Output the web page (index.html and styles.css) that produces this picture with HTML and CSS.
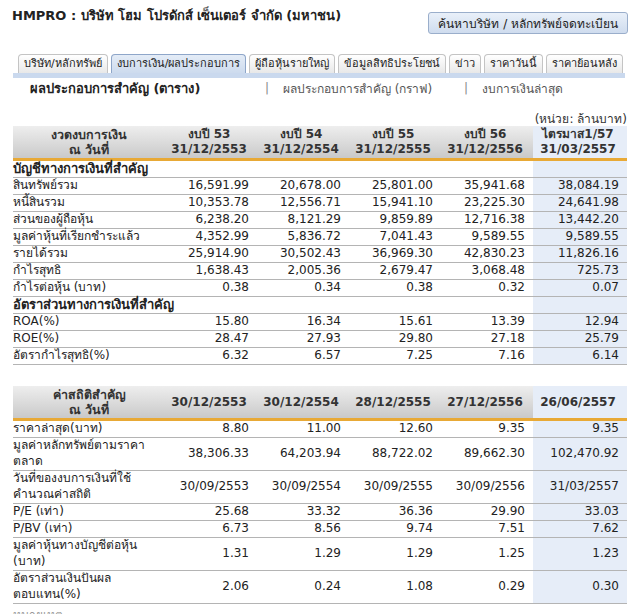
FILE: index.html
```html
<!DOCTYPE html>
<html lang="th">
<head>
<meta charset="utf-8">
<title>HMPRO</title>
<link rel="stylesheet" href="styles.css">
</head>
<body>
<div class="page">
  <div class="top">
    <div class="title">HMPRO : บริษัท โฮม โปรดักส์ เซ็นเตอร์ จำกัด (มหาชน)</div>
    <button class="search-btn">ค้นหาบริษัท / หลักทรัพย์จดทะเบียน</button>
  </div>
  <div class="tabs">
    <span class="tab">บริษัท/หลักทรัพย์</span>
    <span class="tab active">งบการเงิน/ผลประกอบการ</span>
    <span class="tab">ผู้ถือหุ้นรายใหญ่</span>
    <span class="tab">ข้อมูลสิทธิประโยชน์</span>
    <span class="tab">ข่าว</span>
    <span class="tab">ราคาวันนี้</span>
    <span class="tab">ราคาย้อนหลัง</span>
  </div>
  <div class="band"></div>
  <div class="subnav">
    <span class="sub sub-current">ผลประกอบการสำคัญ (ตาราง)</span>
    <span class="sep">|</span>
    <span class="sub sub-2">ผลประกอบการสำคัญ (กราฟ)</span>
    <span class="sep">|</span>
    <span class="sub">งบการเงินล่าสุด</span>
  </div>
  <div class="unit">(หน่วย: ล้านบาท)</div>
  <table class="fin">
    <colgroup><col class="c-label"><col class="c-num"><col class="c-num"><col class="c-num"><col class="c-num"><col class="c-last"></colgroup>
    <thead>
      <tr>
        <th class="h-label">งวดงบการเงิน<br>ณ วันที่</th>
        <th>งบปี 53<br>31/12/2553</th>
        <th>งบปี 54<br>31/12/2554</th>
        <th>งบปี 55<br>31/12/2555</th>
        <th>งบปี 56<br>31/12/2556</th>
        <th class="hl">ไตรมาส1/57<br>31/03/2557</th>
      </tr>
    </thead>
    <tbody>
      <tr class="sec"><td class="lbl">บัญชีทางการเงินที่สำคัญ</td><td></td><td></td><td></td><td></td><td class="hl"></td></tr>
      <tr><td class="lbl">สินทรัพย์รวม</td><td>16,591.99</td><td>20,678.00</td><td>25,801.00</td><td>35,941.68</td><td class="hl">38,084.19</td></tr>
      <tr><td class="lbl">หนี้สินรวม</td><td>10,353.78</td><td>12,556.71</td><td>15,941.10</td><td>23,225.30</td><td class="hl">24,641.98</td></tr>
      <tr><td class="lbl">ส่วนของผู้ถือหุ้น</td><td>6,238.20</td><td>8,121.29</td><td>9,859.89</td><td>12,716.38</td><td class="hl">13,442.20</td></tr>
      <tr><td class="lbl">มูลค่าหุ้นที่เรียกชำระแล้ว</td><td>4,352.99</td><td>5,836.72</td><td>7,041.43</td><td>9,589.55</td><td class="hl">9,589.55</td></tr>
      <tr><td class="lbl">รายได้รวม</td><td>25,914.90</td><td>30,502.43</td><td>36,969.30</td><td>42,830.23</td><td class="hl">11,826.16</td></tr>
      <tr><td class="lbl">กำไรสุทธิ</td><td>1,638.43</td><td>2,005.36</td><td>2,679.47</td><td>3,068.48</td><td class="hl">725.73</td></tr>
      <tr><td class="lbl">กำไรต่อหุ้น (บาท)</td><td>0.38</td><td>0.34</td><td>0.38</td><td>0.32</td><td class="hl">0.07</td></tr>
      <tr class="sec"><td class="lbl">อัตราส่วนทางการเงินที่สำคัญ</td><td></td><td></td><td></td><td></td><td class="hl"></td></tr>
      <tr><td class="lbl">ROA(%)</td><td>15.80</td><td>16.34</td><td>15.61</td><td>13.39</td><td class="hl">12.94</td></tr>
      <tr><td class="lbl">ROE(%)</td><td>28.47</td><td>27.93</td><td>29.80</td><td>27.18</td><td class="hl">25.79</td></tr>
      <tr><td class="lbl">อัตรากำไรสุทธิ(%)</td><td>6.32</td><td>6.57</td><td>7.25</td><td>7.16</td><td class="hl">6.14</td></tr>
    </tbody>
  </table>

  <table class="fin stats">
    <colgroup><col class="c-label"><col class="c-num"><col class="c-num"><col class="c-num"><col class="c-num"><col class="c-last"></colgroup>
    <thead>
      <tr>
        <th class="h-label">ค่าสถิติสำคัญ<br>ณ วันที่</th>
        <th>30/12/2553</th>
        <th>30/12/2554</th>
        <th>28/12/2555</th>
        <th>27/12/2556</th>
        <th class="hl">26/06/2557</th>
      </tr>
    </thead>
    <tbody>
      <tr><td class="lbl">ราคาล่าสุด(บาท)</td><td>8.80</td><td>11.00</td><td>12.60</td><td>9.35</td><td class="hl">9.35</td></tr>
      <tr class="two"><td class="lbl">มูลค่าหลักทรัพย์ตามราคา<br>ตลาด</td><td>38,306.33</td><td>64,203.94</td><td>88,722.02</td><td>89,662.30</td><td class="hl">102,470.92</td></tr>
      <tr class="two"><td class="lbl">วันที่ของงบการเงินที่ใช้<br>คำนวณค่าสถิติ</td><td>30/09/2553</td><td>30/09/2554</td><td>30/09/2555</td><td>30/09/2556</td><td class="hl">31/03/2557</td></tr>
      <tr><td class="lbl">P/E (เท่า)</td><td>25.68</td><td>33.32</td><td>36.36</td><td>29.90</td><td class="hl">33.03</td></tr>
      <tr><td class="lbl">P/BV (เท่า)</td><td>6.73</td><td>8.56</td><td>9.74</td><td>7.51</td><td class="hl">7.62</td></tr>
      <tr class="two"><td class="lbl">มูลค่าหุ้นทางบัญชีต่อหุ้น<br>(บาท)</td><td>1.31</td><td>1.29</td><td>1.29</td><td>1.25</td><td class="hl">1.23</td></tr>
      <tr class="two"><td class="lbl">อัตราส่วนเงินปันผล<br>ตอบแทน(%)</td><td>2.06</td><td>0.24</td><td>1.08</td><td>0.29</td><td class="hl">0.30</td></tr>
    </tbody>
  </table>
  <div class="note">หมายเหตุ</div>
</div>
</body>
</html>
```

FILE: styles.css
```css
html, body {
  margin: 0;
  padding: 0;
  background: #ffffff;
}
body {
  font-family: Tahoma, "DejaVu Sans", "Noto Sans", sans-serif;
  font-size: 12px;
  color: #222;
}
.page {
  width: 614px;
  padding: 0 13px;
}
.top {
  display: flex;
  justify-content: space-between;
  align-items: flex-start;
  height: 54px;
}
.title {
  margin-top: 8px;
  margin-left: -1px;
  font-weight: bold;
  font-size: 13px;
  color: #222;
  line-height: 16px;
}
.search-btn {
  margin-top: 12px;
  margin-right: -1px;
  height: 22px;
  padding: 0 9px;
  font-family: inherit;
  font-size: 12px;
  color: #222;
  background: linear-gradient(#e9f0f9, #cfdcee);
  border: 1px solid #9aaecb;
  border-radius: 3px;
}
.tabs {
  display: flex;
  gap: 3px;
  padding-left: 5px;
  height: 19px;
  align-items: flex-end;
}
.tab {
  height: 18px;
  line-height: 18px;
  padding: 0 5px;
  font-size: 11px;
  border: 1px solid #c4c4c4;
  border-bottom: none;
  border-radius: 4px 4px 0 0;
  background: linear-gradient(#ffffff, #e8e8e8);
  color: #222;
  white-space: nowrap;
}
.tab.active {
  background: linear-gradient(#e4ecf7, #cddbee);
  border-color: #8ea6c9;
}
.band {
  height: 5px;
  background: #cad9ee;
  margin-right: 2px;
}
.subnav {
  display: flex;
  align-items: center;
  height: 20px;
  padding-left: 17px;
  color: #555;
}
.sub-current {
  font-weight: bold;
  font-size: 13px;
  color: #222;
  width: 235px;
}
.sep {
  color: #888;
  width: 18px;
}
.sub-2 {
  width: 181px;
}
.unit {
  text-align: right;
  margin-top: 14px;
  line-height: 14px;
  color: #333;
}
table.fin {
  width: 614px;
  border-collapse: collapse;
  table-layout: fixed;
}
.c-label { width: 152px; }
.c-num { width: 92px; }
.c-last { width: 94px; }
.fin th {
  height: 32px;
  padding: 0 4px 0 0;
  font-size: 12px;
  font-weight: bold;
  color: #333;
  line-height: 15px;
  text-align: center;
  white-space: nowrap;
  background: linear-gradient(#eeeeee, #c9c9c9);
  border-bottom: 3px solid #e8a936;
}
.fin th.h-label {
  padding: 0;
  font-size: 12.5px;
}
.fin th.hl {
  background: #e6edf8;
}
.fin td {
  height: 16px;
  line-height: 15.6px;
  padding: 0 8px 0 0;
  text-align: right;
  border-bottom: 1px solid #b4b4b4;
  white-space: nowrap;
  color: #222;
}
.fin td.lbl {
  text-align: left;
  padding: 0;
}
.fin td.hl {
  background: #e6edf8;
}
.fin tr.sec td.lbl {
  font-weight: bold;
  font-size: 13px;
}
.stats {
  margin-top: 21px;
}
.stats tr.two td {
  height: 32px;
}
.note {
  color: #999;
  margin-top: 4px;
  line-height: 14px;
}
```
